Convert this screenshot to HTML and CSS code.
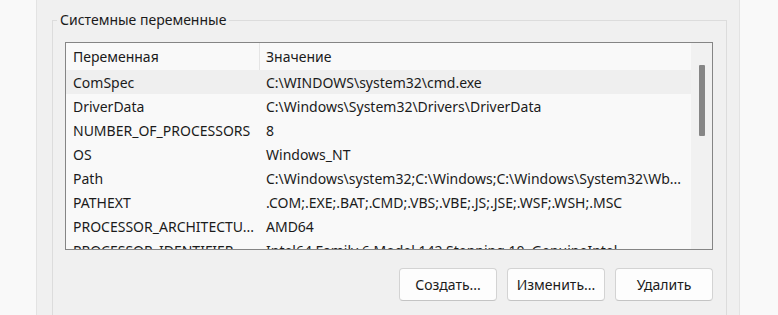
FILE: index.html
```html
<!DOCTYPE html>
<html lang="ru">
<head>
<meta charset="utf-8">
<title>Системные переменные</title>
<link rel="stylesheet" href="styles.css">
</head>
<body>
<div class="dialog">
  <fieldset class="group">
    <legend class="group-title">Системные переменные</legend>
    <div class="list">
      <div class="list-body">
        <div class="row head">
          <div class="cell name">Переменная</div>
          <div class="cell value divided">Значение</div>
        </div>
        <div class="row selected">
          <div class="cell name">ComSpec</div>
          <div class="cell value">C:\WINDOWS\system32\cmd.exe</div>
        </div>
        <div class="row">
          <div class="cell name">DriverData</div>
          <div class="cell value">C:\Windows\System32\Drivers\DriverData</div>
        </div>
        <div class="row">
          <div class="cell name">NUMBER_OF_PROCESSORS</div>
          <div class="cell value">8</div>
        </div>
        <div class="row">
          <div class="cell name">OS</div>
          <div class="cell value">Windows_NT</div>
        </div>
        <div class="row">
          <div class="cell name">Path</div>
          <div class="cell value">C:\Windows\system32;C:\Windows;C:\Windows\System32\Wb...</div>
        </div>
        <div class="row">
          <div class="cell name">PATHEXT</div>
          <div class="cell value">.COM;.EXE;.BAT;.CMD;.VBS;.VBE;.JS;.JSE;.WSF;.WSH;.MSC</div>
        </div>
        <div class="row">
          <div class="cell name">PROCESSOR_ARCHITECTU...</div>
          <div class="cell value">AMD64</div>
        </div>
        <div class="row">
          <div class="cell name">PROCESSOR_IDENTIFIER</div>
          <div class="cell value">Intel64 Family 6 Model 142 Stepping 10, GenuineIntel</div>
        </div>
      </div>
      <div class="scrollbar"><div class="thumb"></div></div>
    </div>
    <div class="buttons">
      <button class="btn">Создать...</button>
      <button class="btn">Изменить...</button>
      <button class="btn">Удалить</button>
    </div>
  </fieldset>
</div>
</body>
</html>
```
FILE: styles.css
```css
html, body {
  margin: 0;
  padding: 0;
  height: 100%;
  overflow: hidden;
}
body {
  background: #f9f9f9;
  font-family: "Noto Sans", "Open Sans", "DejaVu Sans", sans-serif;
  font-size: 14px;
  color: #1b1b1b;
}
.dialog {
  margin-left: 36px;
  width: 704px;
  height: 315px;
  background: #f0f0f0;
  border-left: 1px solid #e3e3e3;
  border-right: 1px solid #e3e3e3;
  padding: 13px 0 0 15px;
  box-sizing: border-box;
  overflow: hidden;
}
.group {
  margin: 0;
  width: 675px;
  height: 302px;
  box-sizing: border-box;
  border: 1px solid #dcdcdc;
  border-bottom: none;
  border-radius: 0;
  padding: 15px 13px 0 12px;
}
.group-title {
  padding: 0 3px;
  margin-left: -8px;
  line-height: 14px;
  color: #1b1b1b;
}
.list {
  width: 648px;
  height: 208px;
  box-sizing: border-box;
  border: 1px solid #858585;
  background: #f9f9f9;
  display: flex;
  overflow: hidden;
}
.list-body {
  flex: 1;
  min-width: 0;
  display: flex;
  flex-direction: column;
}
.row {
  display: flex;
  height: 24px;
  flex: none;
  align-items: center;
}
.row.head {
  height: 27px;
}
.row.selected {
  background: #efefef;
}
.cell {
  white-space: nowrap;
  overflow: hidden;
  box-sizing: border-box;
  height: 100%;
  display: flex;
  align-items: center;
}
.cell.name {
  width: 193px;
  padding-left: 7px;
  flex: none;
}
.cell.value {
  flex: 1;
  padding-left: 7px;
}
.cell.divided {
  border-left: 1px solid #e5e5e5;
  padding-left: 6px;
}
.scrollbar {
  width: 21px;
  flex: none;
  background: #f1f1f1;
  display: flex;
  justify-content: center;
  padding: 22px 0 0 1px;
  box-sizing: border-box;
}
.thumb {
  width: 6px;
  height: 71px;
  background: #868686;
  border-radius: 1px;
}
.buttons {
  display: flex;
  justify-content: flex-end;
  gap: 10px;
  width: 648px;
  margin-top: 18px;
}
.btn {
  width: 98px;
  height: 33px;
  box-sizing: border-box;
  border: 1px solid #d3d3d3;
  border-bottom-color: #c4c4c4;
  border-radius: 4px;
  background: #fdfdfd;
  font-family: inherit;
  font-size: 14px;
  color: #1b1b1b;
  padding: 0;
}
```
